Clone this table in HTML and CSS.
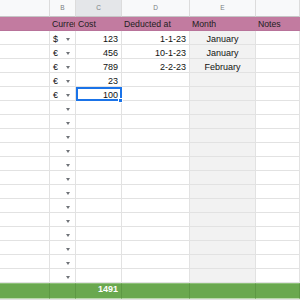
FILE: index.html
```html
<!DOCTYPE html>
<html>
<head>
<meta charset="utf-8">
<link rel="stylesheet" href="styles.css">
</head>
<body>
<div class="sheet">
  <!-- column letters -->
  <div class="ch"></div>
  <div class="ch">B</div>
  <div class="ch sel">C</div>
  <div class="ch">D</div>
  <div class="ch">E</div>
  <div class="ch"></div>

  <!-- header row -->
  <div class="hd"></div>
  <div class="hd">Currency</div>
  <div class="hd">Cost</div>
  <div class="hd">Deducted at</div>
  <div class="hd">Month</div>
  <div class="hd">Notes</div>

  <div class="c"></div><div class="c cur"><span>$</span><i class="dd"></i></div><div class="c num">123</div><div class="c num">1-1-23</div><div class="c mon">January</div><div class="c"></div>
  <div class="c"></div><div class="c cur"><span>€</span><i class="dd"></i></div><div class="c num">456</div><div class="c num">10-1-23</div><div class="c mon">January</div><div class="c"></div>
  <div class="c"></div><div class="c cur"><span>€</span><i class="dd"></i></div><div class="c num">789</div><div class="c num">2-2-23</div><div class="c mon">February</div><div class="c"></div>
  <div class="c"></div><div class="c cur"><span>€</span><i class="dd"></i></div><div class="c num">23</div><div class="c num"></div><div class="c mon"></div><div class="c"></div>
  <div class="c"></div><div class="c cur"><span>€</span><i class="dd"></i></div><div class="c num active">100<b class="handle"></b></div><div class="c num"></div><div class="c mon"></div><div class="c"></div>

  <div class="c"></div><div class="c cur"><i class="dd"></i></div><div class="c"></div><div class="c"></div><div class="c mon"></div><div class="c"></div>
  <div class="c"></div><div class="c cur"><i class="dd"></i></div><div class="c"></div><div class="c"></div><div class="c mon"></div><div class="c"></div>
  <div class="c"></div><div class="c cur"><i class="dd"></i></div><div class="c"></div><div class="c"></div><div class="c mon"></div><div class="c"></div>
  <div class="c"></div><div class="c cur"><i class="dd"></i></div><div class="c"></div><div class="c"></div><div class="c mon"></div><div class="c"></div>
  <div class="c"></div><div class="c cur"><i class="dd"></i></div><div class="c"></div><div class="c"></div><div class="c mon"></div><div class="c"></div>
  <div class="c"></div><div class="c cur"><i class="dd"></i></div><div class="c"></div><div class="c"></div><div class="c mon"></div><div class="c"></div>
  <div class="c"></div><div class="c cur"><i class="dd"></i></div><div class="c"></div><div class="c"></div><div class="c mon"></div><div class="c"></div>
  <div class="c"></div><div class="c cur"><i class="dd"></i></div><div class="c"></div><div class="c"></div><div class="c mon"></div><div class="c"></div>
  <div class="c"></div><div class="c cur"><i class="dd"></i></div><div class="c"></div><div class="c"></div><div class="c mon"></div><div class="c"></div>
  <div class="c"></div><div class="c cur"><i class="dd"></i></div><div class="c"></div><div class="c"></div><div class="c mon"></div><div class="c"></div>
  <div class="c"></div><div class="c cur"><i class="dd"></i></div><div class="c"></div><div class="c"></div><div class="c mon"></div><div class="c"></div>
  <div class="c"></div><div class="c cur"><i class="dd"></i></div><div class="c"></div><div class="c"></div><div class="c mon"></div><div class="c"></div>
  <div class="c"></div><div class="c cur"><i class="dd"></i></div><div class="c"></div><div class="c"></div><div class="c mon"></div><div class="c"></div>

  <!-- totals -->
  <div class="tot"></div>
  <div class="tot"></div>
  <div class="tot num">1491</div>
  <div class="tot"></div>
  <div class="tot"></div>
  <div class="tot"></div>
</div>
</body>
</html>
```
FILE: styles.css
```css
html, body {
  margin: 0;
  padding: 0;
  background: #fff;
  overflow: hidden;
}

.sheet {
  display: grid;
  grid-template-columns: 50px 26px 46px 68px 66px 44px;
  grid-template-rows: 17px 14px repeat(18, 14px) 16px;
  width: 300px;
  font-family: "Liberation Sans", Arial, sans-serif;
  font-size: 9px;
  color: #111;
  border-bottom: 1px solid #e2e2e2;
}

.sheet > div {
  box-sizing: border-box;
  border-right: 1px solid #e2e2e2;
  border-bottom: 1px solid #e2e2e2;
  line-height: 17px;
  white-space: nowrap;
  overflow: hidden;
}

/* column letters */
.ch {
  background: #f8f9fa;
  color: #7a7e83;
  font-size: 6.5px;
  text-align: center;
  line-height: 16px !important;
  border-right-color: #dcdcdc !important;
  border-bottom-color: #c6c6c6 !important;
}
.ch.sel {
  background: #e4e6e9;
}

/* header band */
.hd {
  background: #c27ba0;
  color: #1d1d1d;
  font-size: 8.7px;
  padding-left: 2px;
  line-height: 14px !important;
  text-overflow: clip;
  border-right-color: #c27ba0 !important;
  border-bottom-color: #b8739a !important;
}

.c {
  padding: 0 2px;
}
.c.num {
  text-align: right;
  padding-right: 3px;
}
.mon {
  background: #f2f2f2;
  text-align: center;
}

/* currency dropdown cell */
.cur {
  display: flex;
  align-items: flex-start;
  padding-left: 3px !important;
  padding-right: 5px !important;
}
.cur span {
  line-height: 17px;
}
.dd {
  margin-left: auto;
  margin-top: 7px;
  width: 0;
  height: 0;
  border-left: 2.5px solid transparent;
  border-right: 2.5px solid transparent;
  border-top: 3px solid #6f7378;
}

/* selected cell */
.active {
  position: relative;
  overflow: visible !important;
  outline: 2px solid #1a73e8;
  outline-offset: -2px;
}
.handle {
  position: absolute;
  right: -2px;
  bottom: -3px;
  width: 5px;
  height: 5px;
  background: #1a73e8;
  border: 1px solid #fff;
  box-sizing: border-box;
}

/* totals band */
.tot {
  background: #6aa84f;
  color: #fff;
  font-weight: bold;
  line-height: 10px !important;
  border-right-color: #5d9844 !important;
  border-bottom-color: #b9d9ab !important;
  border-top: 1px solid #8fc17a;
}
.tot.num {
  text-align: right;
  padding-right: 3px;
}
```
